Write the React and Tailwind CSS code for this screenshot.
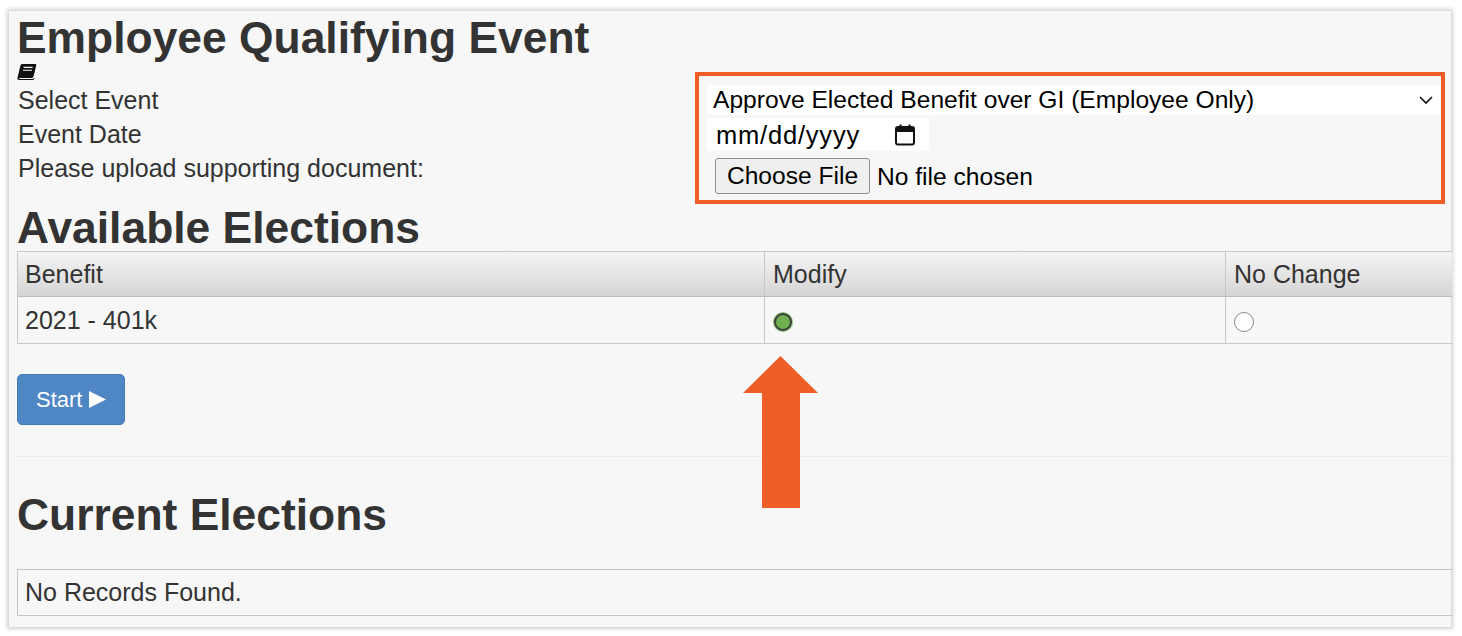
import React from "react";

const Heading = ({ children, className }) => (
  <h1 className={`font-bold text-[#333333] text-[44.4px] leading-[52px] ${className}`}>{children}</h1>
);

const App = () => {
  return (
    <div className="h-[636px] w-[1462px] overflow-hidden bg-white pl-[9px] pt-[11px] font-['Liberation_Sans',Arial,sans-serif]">
      <div className="relative h-[616px] w-[1442px] bg-[#f7f7f7] pl-2 text-[25px] text-[#333333] shadow-[0_0_4px_2px_rgba(0,0,0,0.18)]">
        <Heading className="pt-[1px]">Employee Qualifying Event</Heading>

        <svg viewBox="0 0 20 18" className="mt-[-1px] h-[18px] w-[20px]">
          <path d="M5.5 1h12.6c.9 0 1.3.6 1.1 1.4l-2.6 10.8c-.3 1.2-1 1.7-2 1.7H2.8c-.9 0-1 .9-.1 1h13c.7 0 1.1-.3 1.3-.8l.6.2c-.2 1-.9 1.7-2 1.7H2.2C.8 17 .2 16 .5 14.7L3.4 2.8C3.7 1.6 4.4 1 5.5 1z" fill="#111111" />
          <path d="M6.6 4.4h9M6 7.2h9" stroke="#f7f7f7" strokeWidth="1.1" />
        </svg>

        <div className="flex">
          <div className="flex w-[690px] flex-col pl-[1px] pt-[2px] leading-[34px]">
            <div>Select Event</div>
            <div>Event Date</div>
            <div>Please upload supporting document:</div>
          </div>
          <div className="flex w-[733px] flex-col pt-[4px] text-[24.6px] text-black">
            <div className="flex h-[30px] items-center justify-between bg-white pl-[6px] pr-[7px]">
              <span className="pt-[1px]">Approve Elected Benefit over GI (Employee Only)</span>
              <svg viewBox="0 0 14 9" className="h-[9px] w-[14px]" fill="none" stroke="#111111" strokeWidth="1.6">
                <path d="M1 1l6 6 6-6" />
              </svg>
            </div>
            <div className="mt-[3px] flex h-[33px] w-[222px] items-center bg-white pl-[9px]">
              <span className="pt-[2px] text-[25.5px] tracking-[0.8px]">mm/dd/yyyy</span>
              <svg viewBox="0 0 20 22" className="ml-[35px] h-[22px] w-[20px]" fill="none">
                <rect x="1" y="3" width="18" height="17.5" rx="2" stroke="#111111" strokeWidth="2" />
                <rect x="1" y="3" width="18" height="5" fill="#111111" />
                <path d="M5.5 0.5v3M14.5 0.5v3" stroke="#111111" strokeWidth="2" />
              </svg>
            </div>
            <div className="ml-2 mt-[7px] flex h-[36px] items-center gap-[7px]">
              <div className="flex h-[36px] w-[155px] items-center justify-center rounded-[3px] border border-[#8f8f8f] bg-[#efefef] pt-[1px]">
                Choose File
              </div>
              <span className="pt-[2px]">No file chosen</span>
            </div>
          </div>
        </div>

        <Heading className="mt-[8px]">Available Elections</Heading>

        <table className="mt-[-3px] w-[1435px] table-fixed border-collapse">
          <thead>
            <tr className="h-[45px] bg-gradient-to-b from-[#f5f5f5] to-[#d5d4d4]">
              <th className="w-[747px] border border-[#c8c8c8] border-b-[#bdbdbd] pl-[7px] pt-[2px] text-left font-normal">Benefit</th>
              <th className="w-[461px] border border-[#c8c8c8] border-b-[#bdbdbd] pl-2 pt-[2px] text-left font-normal">Modify</th>
              <th className="border-y border-[#c8c8c8] border-b-[#bdbdbd] pl-2 pt-[2px] text-left font-normal">No Change</th>
            </tr>
          </thead>
          <tbody>
            <tr className="h-[47px]">
              <td className="border border-[#c8c8c8] pl-[7px] pt-[2px]">2021 - 401k</td>
              <td className="border border-[#c8c8c8] pl-2">
                <div className="mt-[4px] flex h-[20px] w-[20px] items-center justify-center rounded-full bg-[#8cc47a]">
                  <div className="h-[18px] w-[18px] rounded-full border-[2.5px] border-[#3d3d3d] bg-[#70b050]" />
                </div>
              </td>
              <td className="border-y border-[#c8c8c8] pl-2">
                <div className="mt-[4px] h-[20px] w-[20px] rounded-full border-[1.5px] border-[#8a8a8a] bg-white" />
              </td>
            </tr>
          </tbody>
        </table>

        <button className="mt-[30px] flex h-[51px] w-[108px] items-center rounded-[5px] border border-[#447bb5] bg-[#4f86c4] pl-[18px] text-[22px] text-white">
          Start
          <svg viewBox="0 0 17 17" className="ml-[7px] h-[17px] w-[17px]">
            <path d="M0 0l17 8.5L0 17z" fill="#ffffff" />
          </svg>
        </button>

        <hr className="mt-[31px] border-[#ececec]" />

        <Heading className="mt-[32px]">Current Elections</Heading>

        <div className="mt-[28px] flex h-[47px] w-[1435px] items-center border-y border-l border-[#c4c4c4] pl-[7px]">
          No Records Found.
        </div>

        {/* orange highlight over the form controls */}
        <div className="absolute left-[686px] top-[61px] h-[132px] w-[750px] border-4 border-[#f05e28]" />

        {/* orange arrow pointing at the Modify radio */}
        <svg viewBox="0 0 75 152" className="absolute left-[734px] top-[345px] h-[152px] w-[75px]">
          <path d="M37.5 0L75 37h-18v115H19V37H0z" fill="#f05e28" />
        </svg>
      </div>
    </div>
  );
};

export default App;
